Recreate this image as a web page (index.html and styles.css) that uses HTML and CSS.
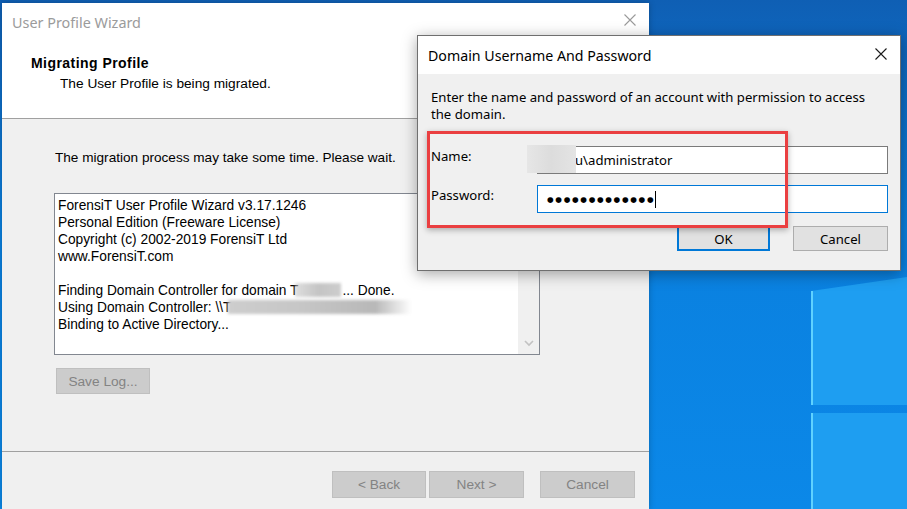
FILE: index.html
```html
<!DOCTYPE html>
<html>
<head>
<meta charset="utf-8">
<title>User Profile Wizard</title>
<link rel="stylesheet" href="styles.css">
</head>
<body>
<div class="desktop">
  <svg class="wallpaper" width="907" height="509" viewBox="0 0 907 509">
    <defs>
      <linearGradient id="bg" x1="0" y1="0" x2="0" y2="1">
        <stop offset="0" stop-color="#0f5fb4"/>
        <stop offset="0.45" stop-color="#0a80df"/>
        <stop offset="1" stop-color="#0b88e8"/>
      </linearGradient>
    </defs>
    <rect width="907" height="509" fill="url(#bg)"/>
    <polygon points="811,291 907,277 907,405 811,405" fill="#1e9ef1"/>
    <polygon points="811,413 907,413 907,509 811,509" fill="#1e9ef1"/>
    <line x1="812" y1="291" x2="812" y2="405" stroke="#5fd2ff" stroke-width="2"/>
    <line x1="812" y1="413" x2="812" y2="509" stroke="#5fd2ff" stroke-width="2"/>
  </svg>

  <div class="wizard">
    <div class="wz-head">
      <div class="wz-titlebar">
        <span class="wz-title">User Profile Wizard</span>
        <svg class="wz-close" width="12" height="12" viewBox="0 0 12 12"><path d="M0.5 0.5 L11.5 11.5 M11.5 0.5 L0.5 11.5" stroke="#9a9a9a" stroke-width="1.1"/></svg>
      </div>
      <div class="wz-header">
        <div class="h-title">Migrating Profile</div>
        <div class="h-sub">The User Profile is being migrated.</div>
      </div>
    </div>
    <div class="wz-body">
      <p class="wait">The migration process may take some time. Please wait.</p>
      <div class="log">
        <div class="log-text">
          <div>ForensiT User Profile Wizard v3.17.1246</div>
          <div>Personal Edition (Freeware License)</div>
          <div>Copyright (c) 2002-2019 ForensiT Ltd</div>
          <div>www.ForensiT.com</div>
          <div class="blank">&nbsp;</div>
          <div>Finding Domain Controller for domain T<span class="smudge s1"></span>... Done.</div>
          <div>Using Domain Controller: \\T<span class="smudge s2"></span></div>
          <div>Binding to Active Directory...</div>
        </div>
        <div class="scroll">
          <svg width="10" height="7" viewBox="0 0 10 7"><path d="M1 1 L5 5 L9 1" fill="none" stroke="#c2c2c2" stroke-width="1.6"/></svg>
        </div>
      </div>
      <button class="btn savelog">Save Log...</button>
    </div>
    <div class="wz-footer">
      <button class="btn">&lt; Back</button>
      <button class="btn next">Next &gt;</button>
      <button class="btn cancel">Cancel</button>
    </div>
  </div>

  <div class="dialog">
    <div class="dlg-titlebar">
      <span class="dlg-title">Domain Username And Password</span>
      <svg class="dlg-close" width="12" height="12" viewBox="0 0 12 12"><path d="M0.5 0.5 L11.5 11.5 M11.5 0.5 L0.5 11.5" stroke="#1a1a1a" stroke-width="1.1"/></svg>
    </div>
    <div class="dlg-body">
      <p class="dlg-text">Enter the name and password of an account with permission to access the domain.</p>
      <div class="form">
        <label class="lbl">Name:</label>
        <div class="field">
          <span class="name-smudge"></span>
          <span class="val name-val">u\administrator</span>
        </div>
        <label class="lbl">Password:</label>
        <div class="field focus">
          <span class="val dots">●●●●●●●●●●●●●</span><span class="caret"></span>
        </div>
      </div>
      <div class="dlg-buttons">
        <button class="dbtn ok">OK</button>
        <button class="dbtn">Cancel</button>
      </div>
      <div class="annot"></div>
    </div>
  </div>
</div>
</body>
</html>
```
FILE: styles.css
```css
* { box-sizing: border-box; }
html, body { margin: 0; padding: 0; }
body { width: 907px; height: 509px; overflow: hidden; font-family: "Liberation Sans", Arial, sans-serif; }
.desktop { position: relative; width: 907px; height: 509px; overflow: hidden; }
.wallpaper { position: absolute; left: 0; top: 0; }

/* Wizard window */
.wizard {
  position: absolute; left: 2px; top: 3px; width: 647px; height: 506px;
  background: #f0f0f0; display: flex; flex-direction: column;
  box-shadow: 0 0 6px rgba(0,0,0,0.25);
}
.wz-head { background: #fff; border-bottom: 1px solid #a0a0a0; height: 116px; }
.wz-titlebar { height: 37px; display: flex; align-items: center; justify-content: space-between; padding: 0 13px 0 10px; }
.wz-title { font-family: "Noto Sans", sans-serif; font-size: 14.4px; color: #9b9b9b; margin-top: 1px; }
.wz-close { margin-top: -3px; }
.wz-header { padding-top: 14px; }
.h-title { font-weight: bold; font-size: 14px; line-height: 18px; color: #000; padding-left: 29px; letter-spacing: 0.45px; }
.h-sub { font-size: 13.7px; line-height: 18px; margin-top: 3px; padding-left: 58px; color: #000; }

.wz-body { flex: 1; padding: 30px 0 0 52px; }
.wait { margin: 0 0 0 1px; font-size: 13.6px; line-height: 17px; color: #000; }
.log {
  margin-top: 27px; width: 486px; height: 162px; border: 1px solid #828790; background: #fff;
  display: flex;
}
.log-text { flex: 1; padding: 3px 0 0 3px; font-size: 13.75px; line-height: 17px; color: #000; white-space: nowrap; overflow: visible; }
.scroll { width: 21px; background: #f0f0f0; display: flex; align-items: flex-end; justify-content: center; padding-bottom: 7px; }
.smudge { display: inline-block; height: 14px; vertical-align: -2px; filter: blur(1.5px); }
.s1 { width: 46px; margin-left: -3px; margin-right: 1px; background: linear-gradient(90deg, rgba(200,200,200,0.6), #c4c4c4 50%, #cdcdcd); }
.s2 { width: 184px; margin-left: -3px; background: linear-gradient(90deg, #cdcdcd, #c6c6c6 40%, #b8b8b8 80%, rgba(255,255,255,0)); }

.btn {
  font-family: "Liberation Sans", Arial, sans-serif; font-size: 13.7px; color: #838383;
  background: #cccccc; border: 1px solid #bfbfbf; height: 27px; width: 94px; padding: 0; margin: 0;
}
.savelog { display: block; margin: 13px 0 0 2px; height: 26px; }
.wz-footer { height: 58px; border-top: 1px solid #a0a0a0; display: flex; padding: 19px 0 0 330px; }
.wz-footer .next { margin-left: 3px; width: 95px; }
.wz-footer .cancel { margin-left: 16px; width: 95px; }

/* Domain dialog */
.dialog {
  position: absolute; left: 417px; top: 35px; width: 484px; height: 236px;
  background: #f0f0f0; border: 1px solid #6f6f6f;
  box-shadow: 0 3px 14px rgba(0,0,0,0.35);
  font-family: "Noto Sans", sans-serif; color: #000;
}
.dlg-titlebar { height: 38px; background: #fff; display: flex; align-items: center; justify-content: space-between; padding: 0 13px 0 10px; }
.dlg-title { font-size: 14.2px; }
.dlg-close { margin-top: -2px; }
.dlg-body { position: relative; padding: 15px 12px 0 13px; }
.dlg-text { margin: 0; font-size: 13.15px; line-height: 17px; width: 455px; }
.form { display: grid; grid-template-columns: 106px 351px; row-gap: 11px; margin-top: 23px; }
.lbl { font-size: 13.15px; line-height: 17px; padding-top: 2px; }
.field { position: relative; height: 28px; background: #fff; border: 1px solid #7a7a7a; display: flex; align-items: center; }
.field.focus { border-color: #0078d7; }
.val { font-size: 13.15px; }
.name-val { padding-left: 37px; }
.name-smudge { position: absolute; left: -11px; top: -2px; width: 49px; height: 28px; background: linear-gradient(90deg, #e6e6e6, #dcdcdc 50%, #e4e4e4); filter: blur(0.6px); }
.dots { font-family: "DejaVu Sans", sans-serif; font-size: 7.6px; letter-spacing: 1.7px; padding-left: 9px; }
.caret { display: inline-block; width: 1px; height: 17px; background: #000; margin-left: 0px; }
.dlg-buttons { display: flex; justify-content: flex-end; gap: 23px; margin-top: 13px; }
.dbtn { font-family: "Noto Sans", sans-serif; font-size: 13.15px; width: 95px; height: 25px; background: #e1e1e1; border: 1px solid #adadad; padding: 0; color: #000; }
.dbtn.ok { width: 93px; border: 2px solid #0078d7; }
.annot {
  position: absolute; left: 9px; top: 57px; width: 361px; height: 97px;
  border: 3px solid #ea3f41; box-shadow: 0 2px 6px rgba(0,0,0,0.3);
}
```
